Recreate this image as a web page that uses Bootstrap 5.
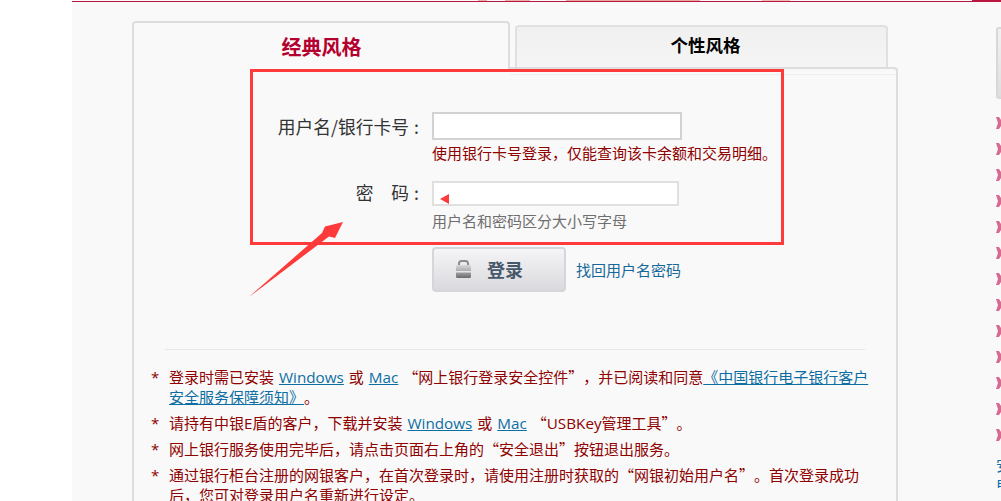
<!DOCTYPE html>
<html lang="zh-CN"><head><meta charset="utf-8"><title>登录</title>
<link href="https://cdn.jsdelivr.net/npm/bootstrap@5.3.0/dist/css/bootstrap.min.css" rel="stylesheet">
<style>
html,body{height:501px;overflow:hidden;background:#fff}
body{font-family:"Noto Sans CJK SC","Open Sans",sans-serif;font-size:15px;line-height:20px;color:#333;text-spacing-trim:space-all}
.shell{margin-left:72px;height:501px;background:#f9f9f9;position:relative;overflow:hidden}
.fringe{height:1px;background:linear-gradient(90deg,#f9f9f9 406px,#e8b0a8 406px,#e8b0a8 415px,#f9f9f9 415px,#f9f9f9 433px,#e8b0a8 433px,#e8b0a8 458px,#f9f9f9 458px,#f9f9f9 494px,#e8a8a0 494px,#e8a8a0 628px,#f9f9f9 628px,#f9f9f9 690px,#eebbb5 690px,#eebbb5 718px,#f9f9f9 718px,#f9f9f9 900px,#b9173f 900px)}
.redline{height:1px;background:#b9173f}
.bodyrow{height:499px}
.mainc{width:766px;margin-left:60px;flex:none;padding-top:19px}
.tabon{width:378px;height:54px;background:#f9f9f9;border:2px solid #ddd;border-bottom:0;border-radius:4px 4px 0 0;font-size:20px;font-weight:700;color:#b4002f;position:relative;z-index:2;padding:14px 0 0 1px;margin-right:5px}
.tabon::after{content:"";position:absolute;right:-2px;top:46px;width:2px;height:8px;background:#f9f9f9}
.taboff{width:373px;height:43px;margin-top:4px;background:linear-gradient(#f0f0f0,#f5f5f5);border:2px solid #e0e0e0;border-bottom:0;border-radius:4px 4px 0 0;font-size:17.5px;font-weight:700;color:#000;padding:8px 0 0 8px}
.panel{margin-top:-8px;height:500px;border:2px solid #ddd;border-radius:0 4px 0 0;background:#f9f9f9;position:relative}
.strip{height:6px;border-bottom:1px solid #eee}
.flabel{width:298px;font-size:17.75px;color:#333;justify-content:flex-end;padding-right:8px}
.colon{display:inline-block;width:15px;text-align:center}
.inp1{width:250px;height:28px;border:2px solid #d2d2d2;background:#fff;border-radius:0;padding:0}
.inp2{width:247px;height:25px;border:2px solid #e0e0e0;background:#fff;border-radius:0;padding:0}
.hintr{color:#8f0000;white-space:nowrap;margin-top:3px}
.hintg{color:#6e6e6e;white-space:nowrap;margin-top:5px}
.rowa{padding-top:37px}
.rowb{padding-top:18px}
.lab1{height:28px}
.lab2{height:22px}
.gapcell{width:298px}
.lgbtn{width:134px;height:45px;border:2px solid #d6d6da;border-radius:4px;background:linear-gradient(#f5f5f7,#dadade);font-size:18px;font-weight:700;color:#46586a;padding:0 0 0 21px;gap:15px}
.findl{color:#17689a;text-decoration:none;margin-left:10px}
.sep{margin:57px 31px 0 31px;border-top:1px solid #e6e6e6}
.notes{list-style:none;margin:17px 0 0 17px;padding:0;width:720px;color:#8f0000;word-spacing:1.6px}
.notes li{display:flex;margin-bottom:6px}
.star{flex:none;width:18px;font-family:"Open Sans",sans-serif}
.lat{font-family:"Open Sans",sans-serif;font-size:15.25px}
.notes a{color:#0d6ea3}
.side{width:40px;margin-left:98px;padding-top:25px;flex:none}
.sbtn{width:40px;height:72px;border:2px solid #d8d8d8;border-radius:3px;background:linear-gradient(#f2f2f2,#dedede)}
.chev{display:block;height:26px;width:12px}
.chevs{padding-top:11px}
.sidet{color:#0d6ea3;width:40px;margin-top:7px;white-space:nowrap;line-height:19px}
.marks{position:absolute;left:0;top:0;pointer-events:none;z-index:5}
</style></head>
<body>
<div class="shell">
 <div class="fringe"></div><div class="redline"></div>
 <div class="bodyrow d-flex">
  <div class="mainc">
    <div class="d-flex align-items-start">
      <div class="tabon text-center">经典风格</div>
      <div class="taboff text-center">个性风格</div>
    </div>
    <div class="panel">
      <div class="strip"></div>
      <div class="d-flex rowa">
        <div class="flabel lab1 d-flex align-items-center"><span>用户名/银行卡号<span class="colon">:</span></span></div>
        <div><input class="inp1 d-block form-control" type="text" aria-label="用户名">
          <div class="hintr">使用银行卡号登录，仅能查询该卡余额和交易明细。</div></div>
      </div>
      <div class="d-flex rowb">
        <div class="flabel lab2 d-flex align-items-center"><span>密&emsp;码<span class="colon">:</span></span></div>
        <div><input class="inp2 d-block form-control" type="password" aria-label="密码">
          <div class="hintg">用户名和密码区分大小写字母</div></div>
      </div>
      <div class="d-flex align-items-center mt-3">
        <div class="gapcell"></div>
        <button class="btn lgbtn d-flex align-items-center" type="button">
          <svg width="17" height="19" viewBox="0 0 17 19"><defs><linearGradient id="lk" x1="0" y1="0" x2="0" y2="1"><stop offset="0" stop-color="#d8d8d8"/><stop offset=".5" stop-color="#a8a8a8"/><stop offset="1" stop-color="#6a6a6a"/></linearGradient></defs><path d="M4 7V3.500Q4 1 6.500 1h4Q13 1 13 3.500V7" fill="none" stroke="#8c8c8c" stroke-width="2"/><rect x="1" y="5" width="15" height="13" rx="1.500" fill="url(#lk)"/><rect x="1" y="11" width="15" height="1.500" fill="#e6e6e6"/></svg>
          <span>登录</span></button>
        <a class="findl" href="#">找回用户名密码</a>
      </div>
      <div class="sep"></div>
      <ul class="notes">
        <li><span class="star">*</span><span>登录时需已安装 <a class="lat" href="#">Windows</a> 或 <a class="lat" href="#">Mac</a> “网上银行登录安全控件”，并已阅读和同意<a href="#">《中国银行电子银行客户安全服务保障须知》</a>。</span></li>
        <li><span class="star">*</span><span>请持有中银<span class="lat">E</span>盾的客户，下载并安装 <a class="lat" href="#">Windows</a> 或 <a class="lat" href="#">Mac</a> “<span class="lat">USBKey</span>管理工具”。</span></li>
        <li><span class="star">*</span><span>网上银行服务使用完毕后，请点击页面右上角的“安全退出”按钮退出服务。</span></li>
        <li><span class="star">*</span><span>通过银行柜台注册的网银客户，在首次登录时，请使用注册时获取的“网银初始用户名”。首次登录成功后，您可对登录用户名重新进行设定。</span></li>
      </ul>
    </div>
  </div>
  <div class="side">
    <div class="sbtn"></div>
    <div class="chevs">
      <svg class="chev" viewBox="0 0 12 26"><path d="M0 7H3L5 10V16L3 19H0L2 13z" fill="#d66a92"/></svg>
      <svg class="chev" viewBox="0 0 12 26"><path d="M0 7H3L5 10V16L3 19H0L2 13z" fill="#d66a92"/></svg>
      <svg class="chev" viewBox="0 0 12 26"><path d="M0 7H3L5 10V16L3 19H0L2 13z" fill="#d66a92"/></svg>
      <svg class="chev" viewBox="0 0 12 26"><path d="M0 7H3L5 10V16L3 19H0L2 13z" fill="#d66a92"/></svg>
      <svg class="chev" viewBox="0 0 12 26"><path d="M0 7H3L5 10V16L3 19H0L2 13z" fill="#d66a92"/></svg>
      <svg class="chev" viewBox="0 0 12 26"><path d="M0 7H3L5 10V16L3 19H0L2 13z" fill="#d66a92"/></svg>
      <svg class="chev" viewBox="0 0 12 26"><path d="M0 7H3L5 10V16L3 19H0L2 13z" fill="#d66a92"/></svg>
      <svg class="chev" viewBox="0 0 12 26"><path d="M0 7H3L5 10V16L3 19H0L2 13z" fill="#d66a92"/></svg>
      <svg class="chev" viewBox="0 0 12 26"><path d="M0 7H3L5 10V16L3 19H0L2 13z" fill="#d66a92"/></svg>
      <svg class="chev" viewBox="0 0 12 26"><path d="M0 7H3L5 10V16L3 19H0L2 13z" fill="#d66a92"/></svg>
      <svg class="chev" viewBox="0 0 12 26"><path d="M0 7H3L5 10V16L3 19H0L2 13z" fill="#d66a92"/></svg>
      <svg class="chev" viewBox="0 0 12 26"><path d="M0 7H3L5 10V16L3 19H0L2 13z" fill="#d66a92"/></svg>
      <svg class="chev" viewBox="0 0 12 26"><path d="M0 7H3L5 10V16L3 19H0L2 13z" fill="#d66a92"/></svg>
    </div>
    <div class="sidet">安全控件<br>电子银行</div>
  </div>
 </div>
</div>
<svg class="marks" width="1001" height="501" viewBox="0 0 1001 501">
  <rect x="251.500" y="70.500" width="531" height="173" fill="none" stroke="#ff3a3a" stroke-width="3"/>
  <path d="M440 199l9-5v10z" fill="#ff3a3a"/>
  <path d="M249 297L322 233 325 226.500 343 222 335 238 329 236.500z" fill="#ff3a3a"/>
</svg>
</body></html>
